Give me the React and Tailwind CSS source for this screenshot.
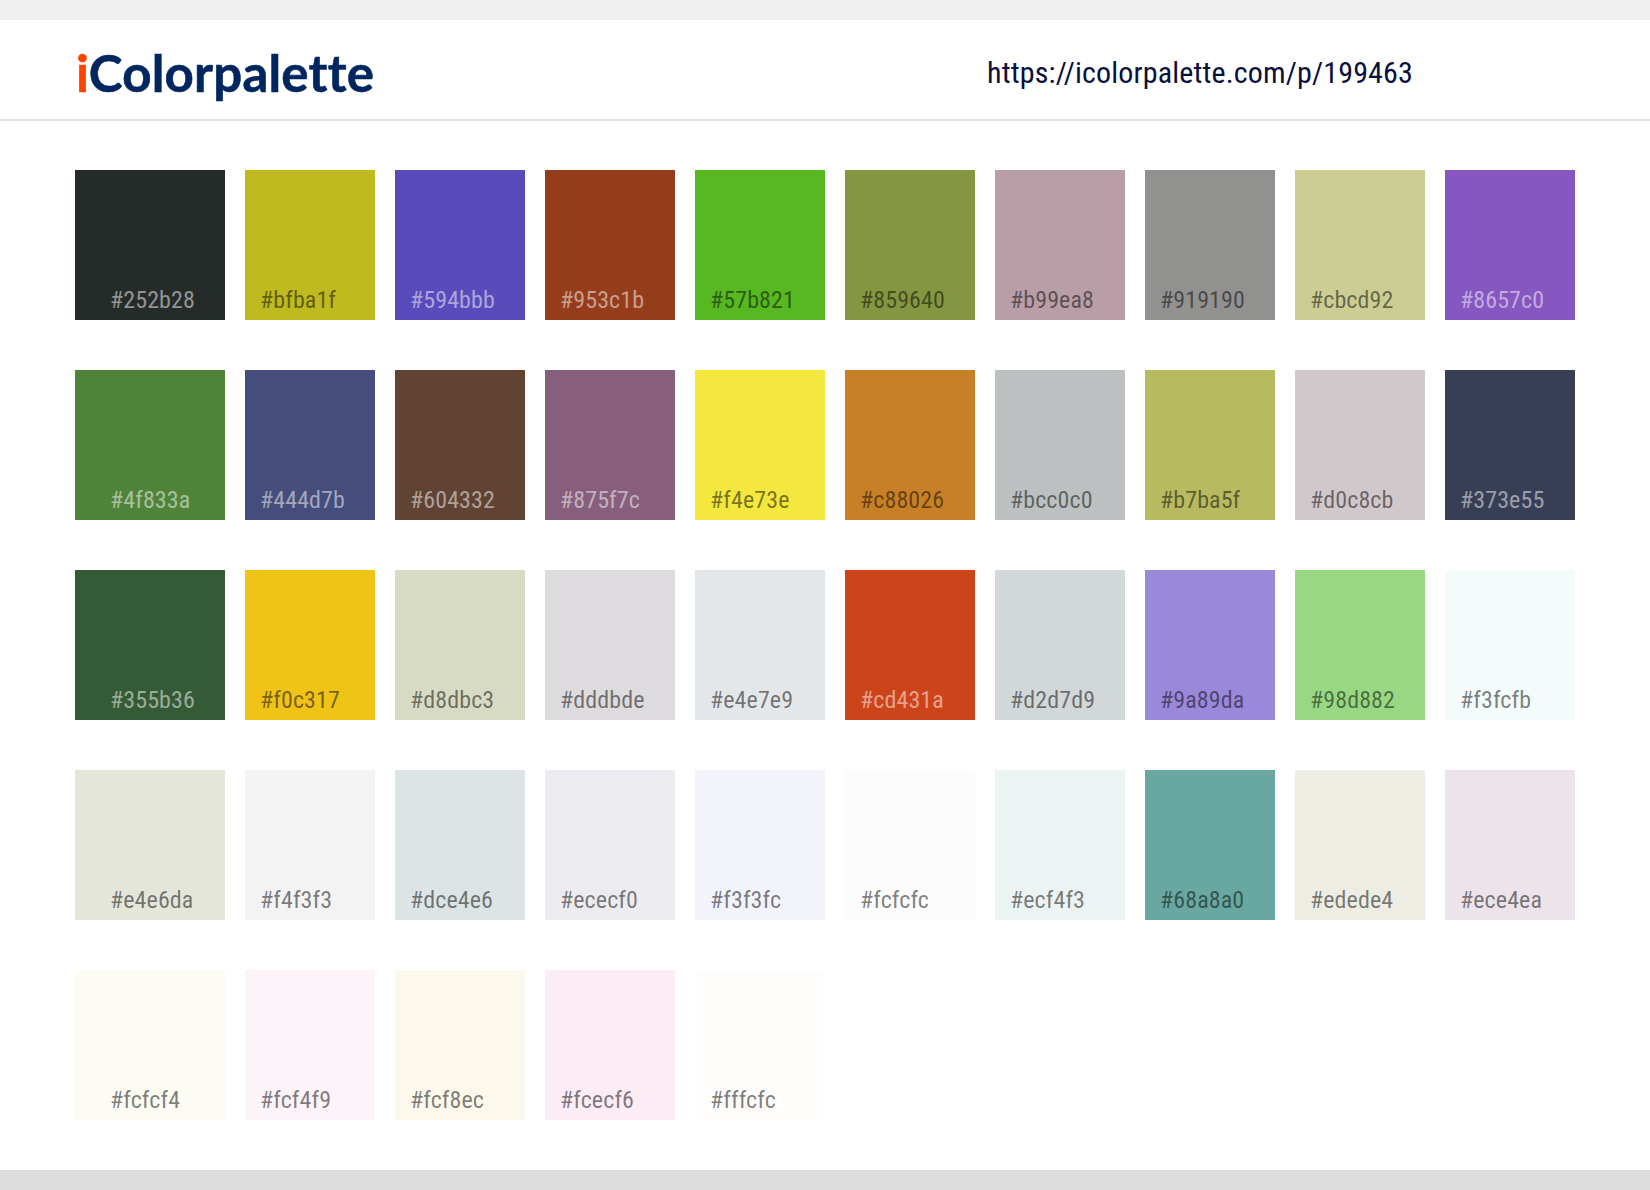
import React from 'react';

const swatches = [
  { hex: '#252b28', bg: 'bg-[#252b28]', light: true },
  { hex: '#bfba1f', bg: 'bg-[#bfba1f]' },
  { hex: '#594bbb', bg: 'bg-[#594bbb]', light: true },
  { hex: '#953c1b', bg: 'bg-[#953c1b]', light: true },
  { hex: '#57b821', bg: 'bg-[#57b821]' },
  { hex: '#859640', bg: 'bg-[#859640]' },
  { hex: '#b99ea8', bg: 'bg-[#b99ea8]' },
  { hex: '#919190', bg: 'bg-[#919190]' },
  { hex: '#cbcd92', bg: 'bg-[#cbcd92]' },
  { hex: '#8657c0', bg: 'bg-[#8657c0]', light: true },
  { hex: '#4f833a', bg: 'bg-[#4f833a]', light: true },
  { hex: '#444d7b', bg: 'bg-[#444d7b]', light: true },
  { hex: '#604332', bg: 'bg-[#604332]', light: true },
  { hex: '#875f7c', bg: 'bg-[#875f7c]', light: true },
  { hex: '#f4e73e', bg: 'bg-[#f4e73e]' },
  { hex: '#c88026', bg: 'bg-[#c88026]' },
  { hex: '#bcc0c0', bg: 'bg-[#bcc0c0]' },
  { hex: '#b7ba5f', bg: 'bg-[#b7ba5f]' },
  { hex: '#d0c8cb', bg: 'bg-[#d0c8cb]' },
  { hex: '#373e55', bg: 'bg-[#373e55]', light: true },
  { hex: '#355b36', bg: 'bg-[#355b36]', light: true },
  { hex: '#f0c317', bg: 'bg-[#f0c317]' },
  { hex: '#d8dbc3', bg: 'bg-[#d8dbc3]' },
  { hex: '#dddbde', bg: 'bg-[#dddbde]' },
  { hex: '#e4e7e9', bg: 'bg-[#e4e7e9]' },
  { hex: '#cd431a', bg: 'bg-[#cd431a]', light: true },
  { hex: '#d2d7d9', bg: 'bg-[#d2d7d9]' },
  { hex: '#9a89da', bg: 'bg-[#9a89da]' },
  { hex: '#98d882', bg: 'bg-[#98d882]' },
  { hex: '#f3fcfb', bg: 'bg-[#f3fcfb]' },
  { hex: '#e4e6da', bg: 'bg-[#e4e6da]' },
  { hex: '#f4f3f3', bg: 'bg-[#f4f3f3]' },
  { hex: '#dce4e6', bg: 'bg-[#dce4e6]' },
  { hex: '#ececf0', bg: 'bg-[#ececf0]' },
  { hex: '#f3f3fc', bg: 'bg-[#f3f3fc]' },
  { hex: '#fcfcfc', bg: 'bg-[#fcfcfc]' },
  { hex: '#ecf4f3', bg: 'bg-[#ecf4f3]' },
  { hex: '#68a8a0', bg: 'bg-[#68a8a0]' },
  { hex: '#edede4', bg: 'bg-[#edede4]' },
  { hex: '#ece4ea', bg: 'bg-[#ece4ea]' },
  { hex: '#fcfcf4', bg: 'bg-[#fcfcf4]' },
  { hex: '#fcf4f9', bg: 'bg-[#fcf4f9]' },
  { hex: '#fcf8ec', bg: 'bg-[#fcf8ec]' },
  { hex: '#fcecf6', bg: 'bg-[#fcecf6]' },
  { hex: '#fffcfc', bg: 'bg-[#fffcfc]' },
];

export default function App() {
  return (
    <div className="min-h-[1190px] bg-white font-['Roboto',sans-serif]">
      <div className="h-5 bg-[#f0f0f0]" />

      {/* Header */}
      <header className="flex h-[101px] items-center justify-between border-b-2 border-[#e2e2e2] pl-[76px] pr-[237px]">
        <div className="pt-[6px] font-['Lato',sans-serif] text-[51px] font-bold leading-none tracking-[0.2px] text-[#00265f] [-webkit-text-stroke:0.6px]">
          <span className="text-[#ff4400]">i</span>Colorpalette
        </div>
        <div className="pt-[6px] text-[30px] tracking-[0.15px] text-[#0a0f3c] [font-stretch:75%]">https://icolorpalette.com/p/199463</div>
      </header>

      {/* Swatches */}
      <main className="grid grid-cols-[150px_repeat(9,130px)] gap-x-5 gap-y-[50px] pl-[75px] pt-[49px]">
        {swatches.map((s, i) => (
          <div
            key={s.hex}
            className={`flex h-[150px] items-end pb-1 ${s.bg} ${i % 10 === 0 ? 'pl-[35px]' : 'pl-[15px]'}`}
          >
            <span className={`text-2xl tracking-[0.1px] [font-stretch:75%] ${s.light ? 'text-white/50' : 'text-black/50'}`}>{s.hex}</span>
          </div>
        ))}
      </main>

      <div className="mt-[50px] h-5 bg-[#dcdcdc]" />
    </div>
  );
}
